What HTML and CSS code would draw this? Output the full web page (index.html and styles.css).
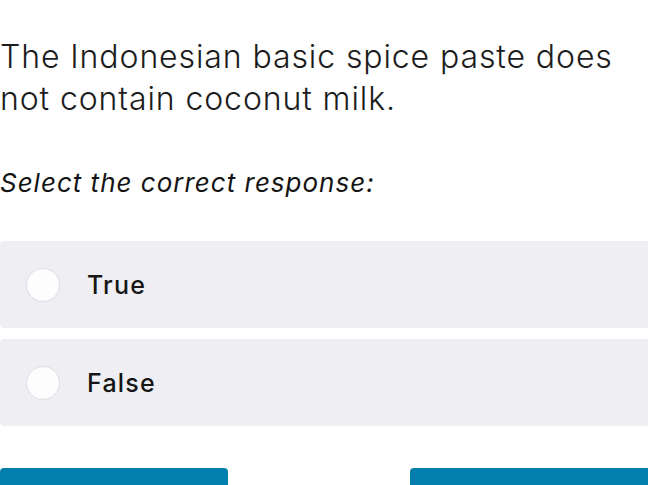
FILE: index.html
```html
<!DOCTYPE html>
<html>
<head>
<meta charset="utf-8">
<link rel="stylesheet" href="styles.css">
</head>
<body>
<div class="quiz">
  <p class="question">The Indonesian basic spice paste does not contain coconut milk.</p>
  <p class="prompt">Select the correct response:</p>
  <div class="options">
    <label class="option"><span class="radio"></span><span class="label">True</span></label>
    <label class="option"><span class="radio"></span><span class="label">False</span></label>
  </div>
  <div class="actions">
    <button class="btn"></button>
    <button class="btn"></button>
  </div>
</div>
</body>
</html>
```

FILE: styles.css
```css
html, body {
  margin: 0;
  padding: 0;
  overflow: hidden;
  background: #fff;
}
.quiz {
  width: 680px;
  font-family: Inter, "Noto Sans", sans-serif;
  color: #1c1c1c;
}
.question {
  margin: 36px 0 0 0;
  width: 630px;
  font-size: 32px;
  line-height: 42px;
  font-weight: 300;
  letter-spacing: 0.9px;
}
.prompt {
  margin: 45px 0 0 0;
  font-size: 26px;
  line-height: 36px;
  font-style: italic;
  font-weight: 400;
  letter-spacing: 1px;
  color: #141414;
}
.options {
  margin-top: 40px;
  display: flex;
  flex-direction: column;
  gap: 11px;
}
.option {
  display: flex;
  align-items: center;
  height: 87px;
  background: #efeff3;
  border-radius: 4px;
  padding-left: 26px;
}
.radio {
  width: 32px;
  height: 32px;
  border: 1px solid #dcdce4;
  border-radius: 50%;
  background: #fdfdfe;
}
.label {
  margin-left: 27px;
  font-size: 25px;
  font-weight: 500;
  letter-spacing: 1.2px;
  color: #161616;
}
.actions {
  margin-top: 42px;
  display: flex;
  gap: 182px;
}
.btn {
  width: 228px;
  height: 40px;
  border: none;
  border-radius: 4px;
  background: #037fad;
  padding: 0;
}
.btn + .btn {
  width: 270px;
}
```
